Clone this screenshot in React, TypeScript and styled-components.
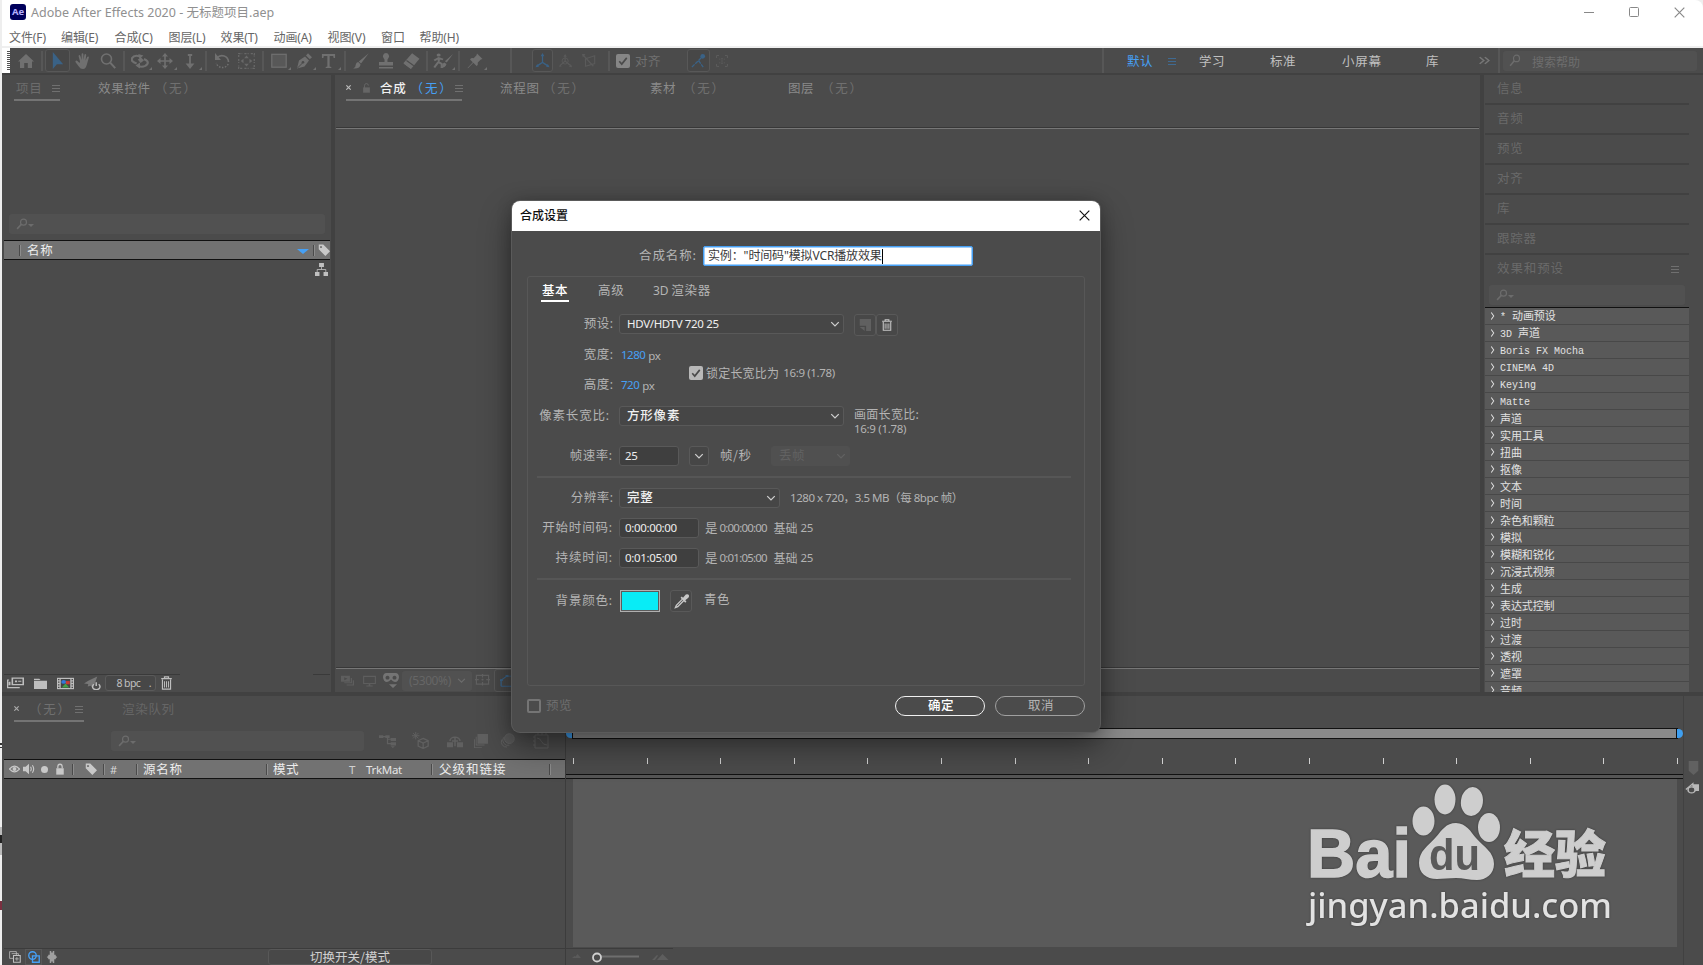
import React from "react";
import styled, { createGlobalStyle, css } from "styled-components";

const LATIN = `"Noto Sans", "Open Sans", "Noto Sans CJK SC", sans-serif`;
const CJK = `"Noto Sans CJK SC", sans-serif`;
const BG = "#4b4b4b";
const GAP = "#414141";
const BLUE = "#46a0f5";

const Global = createGlobalStyle`
  * { box-sizing: border-box; }
  html, body { margin: 0; padding: 0; overflow: hidden; background: #fff; }
  svg { display: block; flex: none; }
`;

const Desktop = styled.div`
  position: relative;
  width: 1703px;
  height: 965px;
  padding-left: 2px;
  overflow: hidden;
  display: flex;
  flex-direction: column;
  font: 12px/1 ${LATIN};
  background: linear-gradient(#eee 0 740px, #eee 740px 743px, #333 743px 745px, #eee 745px 747px, #333 747px 748px, #eee 748px 827px, #bbb 827px 835px, #222 835px 843px, #bbb 843px 855px, #eee 855px 901px, #7a3040 901px 910px, #eee 910px);
`;

type TP = { $c?: string; $s?: number; $ls?: number; $ml?: number; $w?: number; $b?: boolean; $up?: number };
const Txt = styled.span<TP>`
  flex: none;
  white-space: pre;
  line-height: 20px;
  color: ${(p) => p.$c || "#b4b4b4"};
  font-size: ${(p) => p.$s || 12}px;
  letter-spacing: ${(p) => p.$ls || 0}px;
  margin-left: ${(p) => p.$ml || 0}px;
  margin-top: ${(p) => p.$up || 0}px;
  ${(p) => p.$w && css`width: ${p.$w}px;`}
  ${(p) => p.$b && css`font-weight: 500;`}
`;
const Han = styled(Txt)`
  font-family: ${CJK};
  font-size: ${(p) => p.$s || 12.5}px;
  letter-spacing: ${(p) => p.$ls ?? 0.5}px;
`;

/* title bar and menus */
const TitleBar = styled.div`
  height: 24px;
  flex: none;
  display: flex;
  align-items: center;
  background: #fff;
  padding-left: 8px;
  border-top-right-radius: 8px;
`;
const AppBadge = styled.div`
  width: 16px;
  height: 16px;
  border-radius: 3px;
  background: #00005b;
  color: #b5b0ff;
  font: bold 9.5px/15px ${LATIN};
  text-align: center;
  margin-right: 5px;
`;
const WinButtons = styled.div`
  margin-left: auto;
  display: flex;
  align-items: center;
  gap: 35px;
  padding-right: 18px;
`;
const MenuBar = styled.div`
  height: 24px;
  flex: none;
  display: flex;
  align-items: center;
  background: #fff;
  border-bottom: 2px solid #efefef;
  padding: 6px 0 0 7px;
`;
const MenuItem = styled.span<{ $w: number }>`
  width: ${(p) => p.$w}px;
  font-size: 12px;
  letter-spacing: -0.1px;
  white-space: nowrap;
  color: #666;
`;

/* tool bar */
const ToolBar = styled.div`
  height: 25px;
  flex: none;
  display: flex;
  align-items: center;
  background: ${BG};
`;
const Grip = styled.div`
  width: 8px;
  height: 25px;
  background: #fff;
  padding: 3px 0 2px 5px;
  &::after {
    content: "";
    display: block;
    height: 20px;
    background: repeating-linear-gradient(#555 0 1px, #fff 1px 2px);
  }
`;
const Tool = styled.div<{ $on?: boolean; $w?: number; $more?: boolean; $ml?: number }>`
  position: relative;
  width: ${(p) => p.$w || 25}px;
  height: 23px;
  flex: none;
  margin-left: ${(p) => p.$ml || 0}px;
  display: flex;
  align-items: center;
  justify-content: center;
  color: #707070;
  ${(p) => p.$on && css`border: 1px solid #585858; border-radius: 3px; background: #474747; color: #3a6286;`}
  ${(p) => p.$more && css`
    &::after {
      content: "";
      position: absolute;
      right: 0;
      bottom: 2px;
      border-left: 3px solid transparent;
      border-bottom: 3px solid #707070;
    }
  `}
`;
const Sep = styled.div<{ $ml?: number; $mr?: number; $h?: number }>`
  width: 2px;
  height: ${(p) => p.$h || 20}px;
  flex: none;
  background: #575757;
  margin: 0 ${(p) => p.$mr ?? 2.5}px 0 ${(p) => p.$ml ?? 2.5}px;
`;
const Field = styled.div<{ $w: number; $ml?: number; $pl?: number }>`
  width: ${(p) => p.$w}px;
  height: 20px;
  flex: none;
  display: flex;
  align-items: center;
  padding-left: ${(p) => p.$pl ?? 7}px;
  margin-left: ${(p) => p.$ml || 0}px;
  background: #515151;
  border-radius: 3px;
  color: #6c6c6c;
`;
const CheckBox = styled.div<{ $c: string; $empty?: boolean }>`
  width: 14px;
  height: 14px;
  flex: none;
  border-radius: 2px;
  display: flex;
  align-items: center;
  justify-content: center;
  color: ${BG};
  background: ${(p) => (p.$empty ? "transparent" : p.$c)};
  border: ${(p) => (p.$empty ? `2px solid ${p.$c}` : "none")};
`;

/* panels */
const Upper = styled.div`
  height: 623px;
  flex: none;
  display: grid;
  grid-template-columns: 329px 1145px 219px;
  column-gap: 4px;
  padding: 2px 0 4px;
  background: ${GAP};
`;
const Panel = styled.div`
  background: ${BG};
  display: flex;
  flex-direction: column;
  min-width: 0;
  overflow: hidden;
`;
const Tabs = styled.div<{ $pl: number }>`
  height: 26px;
  flex: none;
  display: flex;
  padding: 1px 0 0 ${(p) => p.$pl}px;
`;
const Tab = styled.div<{ $w: number; $on?: boolean; $mr?: number; $pl?: number }>`
  width: ${(p) => p.$w}px;
  height: 25px;
  flex: none;
  display: flex;
  align-items: center;
  padding: 0 0 0 ${(p) => p.$pl || 0}px;
  margin-right: ${(p) => p.$mr || 0}px;
  border-bottom: 2px solid ${(p) => (p.$on ? "#747474" : "transparent")};
`;
const Burger = styled.i<{ $c?: string; $ml?: number }>`
  width: 8px;
  height: 7px;
  flex: none;
  position: relative;
  top: 1px;
  margin-left: ${(p) => p.$ml ?? 0}px;
  background: linear-gradient(
    ${(p) => p.$c || "#707070"} 0 1px, transparent 1px 3px,
    ${(p) => p.$c || "#707070"} 3px 4px, transparent 4px 6px,
    ${(p) => p.$c || "#707070"} 6px 7px
  );
`;
const Grow = styled.div<{ $h?: number }>`
  ${(p) => (p.$h ? css`height: ${p.$h}px; flex: none;` : css`flex: 1;`)}
`;
const ColumnHead = styled.div<{ $m?: string }>`
  height: 20px;
  flex: none;
  display: flex;
  align-items: center;
  margin: ${(p) => p.$m || 0};
  background: #727272;
  border-top: 1px solid #111;
  border-bottom: 1px solid #111;
  color: #c8c8c8;
`;
const Col = styled.div<{ $w?: number; $pl?: number; $sep?: boolean }>`
  height: 18px;
  ${(p) => (p.$w ? css`width: ${p.$w}px; flex: none;` : css`flex: 1;`)}
  display: flex;
  align-items: center;
  padding-left: ${(p) => p.$pl || 0}px;
  ${(p) => p.$sep && css`
    background: linear-gradient(#4a4a4a, #4a4a4a) right 1px center / 1px 11px no-repeat,
      linear-gradient(#8c8c8c, #8c8c8c) right center / 1px 11px no-repeat;
  `}
`;
const FootBar = styled.div<{ $h: number; $pl?: number; $pb?: number }>`
  height: ${(p) => p.$h}px;
  flex: none;
  display: flex;
  align-items: center;
  padding: 0 0 ${(p) => p.$pb || 0}px ${(p) => p.$pl || 0}px;
  color: #bebebe;
`;
const ShortLines = styled.div`
  height: 1px;
  flex: none;
  display: flex;
  justify-content: space-between;
  padding: 0 1px 0 2px;
  &::before, &::after { content: ""; height: 1px; background: #3a3a3a; }
  &::before { width: 176px; }
  &::after { width: 17px; }
`;
const Rule = styled.div`
  height: 2px;
  flex: none;
  margin: 0 1px;
  border-top: 1px solid #383838;
  background: #777;
`;
const DepthButton = styled.div`
  width: 51px;
  height: 16px;
  margin: 0 4px 0 4px;
  display: flex;
  align-items: center;
  justify-content: flex-end;
  padding-right: 4px;
  border: 1px solid #5a5a5a;
  border-radius: 3px;
  background: #474747;
`;

/* side panel */
const SideTitle = styled.div<{ $last?: boolean }>`
  height: 30px;
  flex: none;
  margin: 0 14px 0 1px;
  padding: 0 10px ${(p) => (p.$last ? 4 : 2)}px 12px;
  display: flex;
  align-items: center;
  justify-content: space-between;
  border-bottom: ${(p) => (p.$last ? "none" : `2px solid ${GAP}`)};
`;
const EffectList = styled.div`
  flex: 1;
  min-height: 0;
  overflow: hidden;
  margin: 2px 14px 0 1px;
  border-top: 1px solid #111;
`;
const EffectRow = styled.div`
  height: 17px;
  display: flex;
  align-items: center;
  gap: 5px;
  padding-left: 5px;
  background: #595959;
  border-bottom: 1px solid #484848;
  color: #e2e2e2;
  font: 11px/16px ${CJK};
  letter-spacing: -0.1px;
  white-space: pre;
`;
const Mono = styled.span`
  font: 10px/16px "Liberation Mono", monospace;
  letter-spacing: 0;
`;

/* timeline */
const Timeline = styled.div`
  flex: 1;
  min-height: 0;
  display: grid;
  grid-template-columns: 563px 1118px 20px;
  background: ${BG};
`;
const LayerPane = styled.div`
  display: flex;
  flex-direction: column;
  padding-left: 2px;
`;
const SwitchRow = styled.div`
  height: 37px;
  flex: none;
  display: flex;
  align-items: center;
  color: #606060;
`;
const FootBtn = styled.div`
  width: 164px;
  height: 16px;
  display: flex;
  align-items: center;
  justify-content: center;
  border: 1px solid #585858;
  border-radius: 3px;
  background: #484848;
`;
const TrackPane = styled.div`
  display: flex;
  flex-direction: column;
  padding-top: 32px;
  border-left: 1px solid #3c3c3c;
`;
const WorkArea = styled.div`
  height: 11px;
  flex: none;
  display: flex;
  background: linear-gradient(#111, #111) 6px 0 / 1106px 100% no-repeat;
  padding: 1px 0;
`;
const Handle = styled.div<{ $left?: boolean }>`
  width: 6px;
  height: 9px;
  background: #3f9ff0;
  border-radius: ${(p) => (p.$left ? "5px 0 0 5px" : "0 5px 5px 0")};
`;
const WorkBar = styled.div`
  width: 1106px;
  background: #8a8a8a;
  border: 0 solid #111;
  border-width: 0 1px;
`;
const Ticks = styled.div`
  height: 35px;
  width: 1105px;
  flex: none;
  margin-left: 7px;
  padding-top: 19px;
  display: flex;
  justify-content: space-between;
`;
const Tick = styled.i`
  width: 1px;
  height: 6px;
  background: #d0d0d0;
`;
const RulerEnd = styled.div`
  height: 5px;
  flex: none;
  border-top: 1px solid #111;
  border-bottom: 1px solid #111;
  background: #555;
`;
const Tracks = styled.div`
  height: 168px;
  width: 1104px;
  flex: none;
  margin-left: 7px;
  background: #5a5a5a;
`;
const ZoomBar = styled.div`
  flex: 1;
  display: flex;
  align-items: center;
  padding: 2px 0 0 6px;
  background: linear-gradient(#3c3c3c, #3c3c3c) 0 1px / 107px 1px no-repeat;
`;
const EdgePane = styled.div`
  display: flex;
  flex-direction: column;
  gap: 7px;
  padding: 65px 0 0 1px;
  border-left: 1px solid #414141;
`;

/* dialog */
const Dialog = styled.div`
  position: absolute;
  left: 512px;
  top: 201px;
  width: 588px;
  height: 531px;
  border-radius: 8px;
  background: ${BG};
  box-shadow: 0 0 0 1px #5a5a5a, 0 14px 32px rgba(0, 0, 0, 0.42), 0 0 16px rgba(0, 0, 0, 0.2);
  overflow: hidden;
  display: flex;
  flex-direction: column;
`;
const DialogTitle = styled.div`
  height: 30px;
  flex: none;
  display: flex;
  align-items: center;
  justify-content: space-between;
  padding: 0 10px 2px 8px;
  background: #fff;
  color: #111;
`;
const NameRow = styled.div`
  height: 45px;
  flex: none;
  display: flex;
  align-items: center;
  padding-top: 5px;
`;
const NameInput = styled.div`
  width: 270px;
  height: 20px;
  display: flex;
  align-items: center;
  padding-left: 4px;
  background: #fff;
  border: 1px solid ${BLUE};
  border-radius: 2px;
  box-shadow: inset 0 0 0 0.5px ${BLUE};
`;
const Caret = styled.i`
  width: 1px;
  height: 15px;
  background: #000;
`;
const Group = styled.div`
  height: 410px;
  margin: 0 15px;
  border: 1px solid #575757;
  border-radius: 3px;
  display: flex;
  flex-direction: column;
`;
const GroupTabs = styled.div`
  height: 25px;
  flex: none;
  display: flex;
  padding-left: 13px;
  margin-bottom: 1px;
`;
const GroupTab = styled.div<{ $w: number; $mr?: number; $on?: boolean }>`
  width: ${(p) => p.$w}px;
  margin-right: ${(p) => p.$mr || 0}px;
  padding-top: 3px;
  border-bottom: 2px solid ${(p) => (p.$on ? "#fff" : "transparent")};
`;
const Row = styled.div<{ $mt: number; $h?: number }>`
  height: ${(p) => p.$h || 20}px;
  flex: none;
  margin-top: ${(p) => p.$mt}px;
  display: flex;
  align-items: center;
`;
const Label = styled.div<{ $pr?: number }>`
  width: 91px;
  padding-right: ${(p) => p.$pr ?? 7}px;
  margin-top: -2px;
  text-align: right;
  flex: none;
`;
const Box = styled.div<{ $w: number; $ml?: number; $h?: number; $pl?: number; $kind?: "input" | "off" }>`
  width: ${(p) => p.$w}px;
  height: ${(p) => p.$h || 20}px;
  flex: none;
  display: flex;
  align-items: center;
  justify-content: space-between;
  margin-left: ${(p) => p.$ml || 0}px;
  padding: 0 3px 0 ${(p) => p.$pl ?? 7}px;
  border: 1px solid ${(p) => (p.$kind === "off" ? "#505050" : "#595959")};
  border-radius: 3px;
  background: ${(p) => (p.$kind === "input" ? "#3f3f3f" : p.$kind === "off" ? "#505050" : "#464646")};
  color: ${(p) => (p.$kind === "off" ? "#626262" : "#d0d0d0")};
`;
const IconBox = styled.div<{ $ml?: number; $mt?: number }>`
  width: 22px;
  height: 22px;
  flex: none;
  margin-left: ${(p) => p.$ml || 0}px;
  margin-top: ${(p) => p.$mt || 0}px;
  display: flex;
  align-items: center;
  justify-content: center;
  border: 1px solid #595959;
  border-radius: 3px;
  background: #484848;
  color: #c8c8c8;
`;
const Size = styled.div`
  display: flex;
  margin-top: 11px;
`;
const SizeFields = styled.div`
  width: 161px;
  display: flex;
  flex-direction: column;
  gap: 10px;
`;
const SizeLine = styled.div`
  height: 20px;
  display: flex;
  align-items: center;
`;
const LockRatio = styled.div`
  display: flex;
  align-items: center;
  height: 20px;
  margin-top: 18px;
`;
const Aspect = styled.div`
  margin-left: 10px;
  height: 34px;
  margin-top: 9px;
  display: flex;
  flex-direction: column;
`;
const Divider = styled.div<{ $mt: number }>`
  height: 2px;
  flex: none;
  margin: ${(p) => p.$mt}px 13px 0 9px;
  background: #565656;
`;
const Swatch = styled.div`
  width: 40px;
  height: 22px;
  margin-left: 1px;
  background: #08ecf6;
  border: 1px solid #b0b0b0;
  box-shadow: inset 0 0 0 1px #5c5c5c;
`;
const DialogFoot = styled.div`
  height: 20px;
  margin: 10px 15px 0;
  display: flex;
  align-items: center;
`;
const Pill = styled.div<{ $primary?: boolean }>`
  width: 90px;
  height: 20px;
  display: flex;
  align-items: center;
  justify-content: center;
  padding: 0 0 2px 2px;
  border-radius: 10px;
  border: ${(p) => (p.$primary ? "1.5px solid #f0f0f0" : "1px solid #a0a0a0")};
  margin-left: ${(p) => (p.$primary ? "auto" : "10px")};
`;
const Watermark = styled.svg`
  position: absolute;
  left: 1300px;
  top: 776px;
  filter: drop-shadow(0 0 1px rgba(0, 0, 0, 0.35));
`;

/* icons: drawn on a 16px grid with the current colour */
const f = { fill: "currentColor", stroke: "none" };
const glyphs: Record<string, React.ReactNode> = {
  home: <path {...f} d="M8 1 0 8.500h2V15h4.200v-5h3.600v5H14V8.500h2z" />,
  arrow: <path {...f} d="M3 0v16l4.300-4.500H14z" />,
  hand: <path {...f} d="M5 8.500 3.600 3.200q-.2-1.200.7-1.300.8 0 1.100 1L6.600 7V1.300Q6.700.3 7.500.3t.9 1V7l1-5q.3-1 1-.9.900.2.8 1.200l-.7 5.200 1.700-3.400q.5-.9 1.200-.6.7.4.4 1.300l-2 7Q10.800 16 8 16q-2.800 0-4.200-2.600L.6 9.200Q0 8.200.8 7.700q.8-.4 1.600.3L4.600 10z" />,
  zoom: <><circle cx="6.500" cy="6" r="5" strokeWidth="1.600" /><path d="m10.200 9.700 5 5.500" strokeWidth="2" /></>,
  orbit: <><path d="M5 10.500Q-.5 8.500 1 5 3 1.500 8 3.500" strokeWidth="2" /><path d="M11.500 6q4.500 2 3 5-2.500 4-8.500 2" strokeWidth="2" /><path {...f} d="m6.500 1 4.500 1.500L7.500 6zM8 9.500v6L4 12.500zM6 6.500l3-2 2.500 3-3 2.500z" /></>,
  move: <><path d="M8 2v12M2 8h12" strokeWidth="1.600" /><path {...f} d="m8 0 3 3.500H5zM8 16l3-3.500H5zM0 8l3.500-3v6zM16 8l-3.500-3v6z" /></>,
  dolly: <><path d="M8 1v11" strokeWidth="2" /><path {...f} d="M8 16 3 10.500h10zM5.500 1h5v2h-5z" /></>,
  rotate: <><path d="M3 5a6.500 6.500 0 0 1 11.500 4" strokeWidth="1.600" /><path d="M14.200 11a6.500 6.500 0 0 1-12-1" strokeWidth="1.400" strokeDasharray="1.500 1.500" /><path {...f} d="M1 0v7h6z" /></>,
  anchor: <><path d="M.7 4V.7H4M12 .7h3.300V4M15.300 12v3.300H12M4 15.300H.7V12M6 .7h4M6 15.300h4M.7 6v4M15.300 6v4" strokeWidth="1.200" strokeDasharray="2 1" /><path {...f} d="m8 2.500 2.200 2.700H5.800zM8 13.500l2.200-2.700H5.800zM2.500 8l2.700-2.200v4.400zM13.500 8l-2.700-2.200v4.400z" /></>,
  rect: <rect x=".8" y="1.300" width="14.400" height="12.900" fill="#585858" strokeWidth="1.200" />,
  pen: <><path {...f} d="M1 15.500 3 7.500l6-4 4 4-4.500 6z" /><path d="m1.500 15 5-5" stroke={BG} strokeWidth="1" /><circle cx="7" cy="9.300" r="1.300" fill={BG} stroke="none" /><path {...f} d="m10 2.500 2-2.200 4 4-2.200 2z" /></>,
  type: <path {...f} d="M1 1h14v4h-1.500l-.5-2H9.200v10.500l1.800.5v1H5v-1l1.800-.5V3H3l-.5 2H1z" />,
  brush: <path {...f} d="M15.800.2 8 10.500 5.800 8.400zM5.200 9l2.300 2.300Q7.500 16 .2 15.500 3 14 2.800 11.500 3.200 9 5.200 9z" />,
  stamp: <path {...f} d="M8 0a3.200 3.200 0 0 1 2.300 5.300Q9 6.500 9.500 9H15v3.500H1V9h5.500Q7 6.500 5.700 5.300A3.200 3.200 0 0 1 8 0zM1 14h14v1.500H1z" />,
  eraser: <><path {...f} d="M9 1.200 15.500 6 8 15 1.200 10z" /><path d="m4 7.500 6.500 4.700" stroke={BG} strokeWidth="1" /><path d="m2 10 6 4.500" strokeWidth="1" /></>,
  roto: <><circle cx="4.500" cy="2" r="1.600" {...f} /><path d="M1 7.500 4.500 5 8 6.500M4.800 5l-.3 4L7 11v4M4 9.500 1 14.500" strokeWidth="1.700" /><path {...f} d="M16 1 11 9.500 9.500 8.200zM9 9.500l1.800 1.500Q10 15 6 15q2-1.500 1.500-3 .3-2 1.500-2.500z" /></>,
  pin: <path {...f} d="m10 .5 5.500 5.500-1.700.5-3 3q.5 2.500-1.200 3.500L6.300 9.800 1 15.300.5 15l5.300-5.800L3 6.500Q4 4.700 6.700 5.200l2.800-3z" />,
  axis: <><path d="M8 2.500V10M8 10l-6 4M8 10l6 4" strokeWidth="1.300" /><path {...f} d="m8 0 2 3.500H6zM.5 15.200l3.700-.5-1.800-3zM15.500 15.200l-3.700-.5 1.800-3z" /></>,
  axisWorld: <><circle cx="7" cy="8" r="3.500" /><path d="M7 2v6L1.500 13M7 8l7 6" strokeWidth="1.300" /><path {...f} d="m7 0 2 3H5zM15 15l-3.500-.5 2-3zM0 14.500l3-.3-1.700-2.600z" /></>,
  axisView: <><path d="M4 5.500 14.500 2v9L4 14zM2 2l11 12" strokeWidth="1.300" /><path {...f} d="M0 0h4L1 4z" /></>,
  snap: <><path d="m1 15 6-6 5-5M8 8l5 7" strokeWidth="1.400" strokeDasharray="4 1" /><circle {...f} cx="12.500" cy="3.500" r="2.500" /></>,
  frameSnap: <><path d="M.8 4V.8H4M12 .8h3.200V4M15.200 12v3.200H12M4 15.200H.8V12" strokeWidth="1.300" /><path d="M5 5v1M11 5v1M5 10v1M11 10v1M7 8h2M8 4v2M8 10v2" strokeWidth="1.600" /></>,
  search: <><circle cx="10" cy="5.500" r="4" strokeWidth="1.600" /><path d="M7 8.500 1.500 14.500" strokeWidth="2" /></>,
  lock: <><path d="M4.500 8V4.500a3.300 3.300 0 0 1 6.800-.5" strokeWidth="1.600" /><path {...f} d="M2 7h12v8.500H2z" /></>,
  locked: <><path d="M4.500 7V5a3.500 3.500 0 0 1 7 0v2" strokeWidth="2" /><path {...f} d="M2 7h12v8.500H2z" /></>,
  tag: <path {...f} fillRule="evenodd" d="M1 .5h6L16 9.800 9.800 16 1 7zM4 2.500a1.500 1.500 0 1 0 .01 0z" />,
  flow: <><path {...f} d="M5 0h6v5H5zM0 11h5.500v5H0zM10.500 11H16v5h-5.500z" /><path d="M8 5v3M2.700 11V8h10.600v3" /></>,
  footage: <><path d="M5 2.500h10.300v7.300H5z" strokeWidth="1.500" /><path {...f} d="M7.500 5h2v2h-2zM10.500 5.500h3v1h-3zM0 4h2v1.200H1.200v7.300H12V14H0zM1.500 6.500H3.300v4H1.500z" /></>,
  folder: <path {...f} d="M0 1h6.500l1.500 2H0zM0 4h16v12H0z" />,
  comp: <><path {...f} d="M0 1h16v14H0z" /><path fill="#444" stroke="none" d="M3.500 2.500h9v11h-9zM1 2.500h1.300V4H1zM1 5.500h1.300V7H1zM1 9h1.300v1.500H1zM1 12h1.300v1.500H1zM13.700 2.500H15V4h-1.300zM13.700 5.500H15V7h-1.300zM13.700 9H15v1.500h-1.300zM13.700 12H15v1.500h-1.300z" /><circle cx="6.300" cy="6" r="2.300" fill="#3278d8" stroke="none" /><path fill="#c83a34" stroke="none" d="M8.300 5h3.700v4H8.300z" /><path fill="#43a047" stroke="none" d="m8 8 3.500 5h-7z" /></>,
  rocket: <><path fill="#777" stroke="none" d="M12.500.5 4 5.500 0 8.500l4 .5-.5 3 3-1 1.500 3 2-5z" /><path d="M9.300 9.500a3.500 3.500 0 1 0 4.500 0M11.500 7v4.500" strokeWidth="1.400" /></>,
  trash: <><path d="M1.500 3h13M5.500 3V1h5v2M3 4v11h10V4" strokeWidth="1.400" /><path d="M5.500 6v7M8 6v7M10.500 6v7" strokeWidth="1.200" /></>,
  stack: <path {...f} fillRule="evenodd" d="M0 1h11v8H0zM4 3v4l4-2zM12 4h1.500v7H4V9.800h8zM14.500 7H16v7H7v-1.500h7.500z" />,
  monitor: <><path d="M.8 1.800h14.400v9.400H.8z" strokeWidth="1.400" /><path {...f} d="M7 11.500h2V14h3v1.200H4V14h3z" /></>,
  mask: <path {...f} fillRule="evenodd" d="M3.500 0h9Q16 .3 16 4.500 15.500 9.500 12 9.500 10 9.500 8 7 6 9.500 4 9.500.5 9.500 0 4.500 0 .3 3.500 0zM4.500 3a2 2 0 1 0 .01 0zM11.500 3a2 2 0 1 0 .01 0zM6 12h8l-4 4z" />,
  region: <path d="M1.500 1.500h13v10h-13zM8 0v4M8 9v4M0 6.500h4M12 6.500h4M8 5.500v2M7 6.500h2" strokeWidth="1.300" />,
  shape: <><path d="M1 15V7l5-5.500h10M1 15h15" strokeWidth="1.200" /><path {...f} d="M0 5.500h2.500V8H0zM5 0h2.500v2.500H5z" /></>,
  branch: <><path d="M2 3h5M8 3v8h4M8 6h5" strokeWidth="1.200" /><path {...f} d="M0 1.500h4v3H0zM6 1.500h4v3H6zM11 4.500h5V8h-5zM11 9.500h5V13h-5zM11 14h4l-2 2z" /></>,
  cube: <><path d="m10.500 6 4.700 2.200v5l-4.700 2.300-4.700-2.300v-5zM5.800 8.200l4.700 2.300 4.700-2.300M10.500 10.500v5" strokeWidth="1.200" /><path d="M3.500 0v7M0 3.500h7M1 1l5 5M6 1 1 6" strokeWidth=".9" /></>,
  shy: <><path {...f} d="M0 9.500h6V15H0zM10 9.500h6V15h-6z" /><path d="M3 8a5 4.500 0 0 1 10 0M8 3.500V14M5 8h6" strokeWidth="1.500" /></>,
  film: <path {...f} d="M4 0h12v11H4zM2 3h1v9h9v1H2zM0 6h1v9h8v1H0z" />,
  blur: <><circle cx="10" cy="6" r="5.200" fill="#575757" /><path d="M4 4.500a5.500 5.500 0 0 0 6 8.500M2 7a5.500 5.500 0 0 0 5.500 8" /></>,
  graph: <><path d="M2 2h13v13H2zM0 4h2M0 8h2M0 12h2M5 2V0M9 2V0M13 2V0" /><path d="M4 5q3 0 4.500 3.500T14 12" /></>,
  eye: <><path d="M.7 8Q8 .5 15.300 8 8 15.500.7 8z" strokeWidth="1.600" /><circle {...f} cx="8" cy="8" r="2.800" /></>,
  speaker: <><path {...f} d="M0 5h3.500L8 1v14l-4.500-4H0z" /><path d="M10 5q2 3 0 6M12.500 3q3.500 5 0 10" strokeWidth="1.500" /></>,
  copy: <><path d="M.8.800h9v9h-9zM3.500 3.500h9v9" /><path d="M6 6h9v9H6z" fill={BG} strokeWidth="1.400" /><path d="M10.500 8v5M8 10.500h5" /></>,
  overlap: <><circle cx="6" cy="6" r="5" strokeWidth="1.800" /><path d="M6 6.500h9V15H6z" strokeWidth="1.800" /></>,
  curly: <path {...f} d="M5 0h2v2h2V0h2v5h2v1.500l2 1.500-2 1.500V11h-2v5H9v-2H7v2H5v-5H3V9.500L1 8l2-1.500V5h2z" />,
  close: <path d="m1 1 14 14M15 1 1 15" strokeWidth="1.700" />,
  tabClose: <path d="m1 1 14 14M15 1 1 15" strokeWidth="3.600" />,
  chevron: <path d="m2 5 6 6 6-6" strokeWidth="2" />,
  right: <path d="m4 1 8 7-8 7" strokeWidth="2.400" />,
  more: <path d="m1 2 6 6-6 6M8.500 2l6 6-6 6" strokeWidth="2.400" />,
  check: <path d="m2 8.500 4 4.500 8-10" strokeWidth="2.600" />,
  note: <path {...f} d="M1 0h15v16H9.500V9H1z M1 10.500h6.500V16z" />,
  dropper: <><path d="M9 5.500 2.500 12 1.500 14.500 4 13.500 10.500 7" strokeWidth="1.400" /><path {...f} d="m7 4 1.300-1.300 1.300 1.200 3-3.300q2-1 3 .3 1 1.500-.3 3L12 6.700l1.300 1.300L12 9.300z" /></>,
  keyframe: <><path d="m1 10 8-8v4" strokeWidth="1.500" /><path {...f} d="M9 3h7v9H9z" /><circle cx="7.500" cy="10.500" r="4" fill={BG} strokeWidth="1.800" /></>,
  marker: <path {...f} d="M1 0h14v11l-7 5-7-5z" />,
};
const Svg = styled.svg<{ $ml: number; $c?: string }>`
  margin-left: ${(p) => p.$ml}px;
  ${(p) => p.$c && css`color: ${p.$c};`}
`;
const Icon = ({ n, w = 16, h, c, ml = 0 }: { n: string; w?: number; h?: number; c?: string; ml?: number }) => (
  <Svg $ml={ml} $c={c} width={w} height={h || w} viewBox="0 0 16 16" preserveAspectRatio="none" fill="none" stroke="currentColor">
    {glyphs[n]}
  </Svg>
);
const DropArrow = styled.i<{ $w?: number; $h?: number; $c?: string }>`
  border: ${(p) => p.$w || 3}px solid transparent;
  border-top: ${(p) => p.$h || 3}px solid ${(p) => p.$c || "currentColor"};
  border-bottom: 0;
  margin-top: 3px;
`;
const SearchGlyph = () => (
  <>
    <Icon n="search" w={12} />
    <DropArrow />
  </>
);
const Dot = styled.i`
  width: 7px;
  height: 7px;
  margin-left: 6px;
  border-radius: 50%;
  background: currentColor;
`;
const ShortFoot = styled.div`
  height: 17px;
  flex: none;
  display: flex;
  align-items: center;
  padding-left: 5px;
  border-top: 1px solid #3c3c3c;
  color: #c0c0c0;
`;
const OnBox = styled.div`
  width: 17px;
  height: 16px;
  margin-left: 4px;
  display: flex;
  align-items: center;
  justify-content: center;
  border: 1px solid #585858;
`;
const FootGap = styled.div`
  width: 210px;
`;

const menus: [string, number][] = [
  ["文件(F)", 52], ["编辑(E)", 53.5], ["合成(C)", 54], ["图层(L)", 52], ["效果(T)", 53],
  ["动画(A)", 54], ["视图(V)", 53.5], ["窗口", 38.5], ["帮助(H)", 60],
];
const effects = [
  "* 动画预设", "3D 声道", "Boris FX Mocha", "CINEMA 4D", "Keying", "Matte", "声道", "实用工具", "扭曲", "抠像",
  "文本", "时间", "杂色和颗粒", "模拟", "模糊和锐化", "沉浸式视频", "生成", "表达式控制", "过时", "过渡", "透视", "遮罩", "音频",
];
const mixed = (s: string) => {
  const m = s.match(/^[\x00-\x7f]+/);
  return m ? <span><Mono>{m[0]}</Mono>{s.slice(m[0].length)}</span> : <span>{s}</span>;
};
const None = ({ ml, c = "#707070", w }: { ml: number; c?: string; w?: number }) => (
  <Han $c={c} $ml={ml} $ls={1.8} $w={w}>（无）</Han>
);

const TimeRow = ({ label, value, mt }: { label: string; value: string; mt: number }) => (
  <Row $mt={mt}>
    <Label><Han $ls={0.8}>{label}</Han><Txt>:</Txt></Label>
    <Box $w={80} $pl={5} $kind="input"><Txt $c="#eee" $s={11.5} $ls={-0.35}>{value}</Txt></Box>
    <Han $ml={6} $ls={0}>是</Han>
    <Txt $s={11.5} $ls={-0.8} $ml={2} $w={54}>{value}</Txt>
    <Han $s={12} $ls={0}>基础</Han>
    <Txt $s={11.5} $ml={3} $ls={-0.3}>25</Txt>
  </Row>
);

const SettingsDialog = () => (
  <Dialog>
    <DialogTitle>
      <Han $c="#111" $s={12} $ls={0} $b>合成设置</Han>
      <Icon n="close" w={11} />
    </DialogTitle>
    <NameRow>
      <Han $ml={127} $ls={0.9} $w={64} $up={-2}>合成名称:</Han>
      <NameInput>
        <Txt $c="#3a3a3a" $s={12} $ls={-0.13}>实例："时间码"模拟VCR播放效果</Txt>
        <Caret />
      </NameInput>
    </NameRow>
    <Group>
      <GroupTabs>
        <GroupTab $w={28} $mr={29} $on><Han $c="#fff" $ml={1} $b>基本</Han></GroupTab>
        <GroupTab $w={28} $mr={27}><Han $ls={0.8}>高级</Han></GroupTab>
        <GroupTab $w={70}><Txt $ls={-0.2}>3D </Txt><Han $ls={0.8}>渲染器</Han></GroupTab>
      </GroupTabs>
      <Row $mt={11}>
        <Label $pr={6}><Han>预设</Han><Txt>:</Txt></Label>
        <Box $w={225}><Txt $c="#f0f0f0" $s={11.5} $ls={-0.33}>HDV/HDTV 720 25</Txt><Icon n="chevron" w={10} /></Box>
        <IconBox $ml={10} $mt={2}><Icon n="note" w={12} c="#606060" /></IconBox>
        <IconBox $mt={2}><Icon n="trash" w={12} /></IconBox>
      </Row>
      <Size>
        <SizeFields>
          <SizeLine>
            <Label $pr={6}><Han>宽度</Han><Txt>:</Txt></Label>
            <Txt $c={BLUE} $s={11.5} $ls={-0.5} $ml={2}>1280</Txt><Txt $ml={3} $s={11.5} $ls={-0.4} $up={2}>px</Txt>
          </SizeLine>
          <SizeLine>
            <Label $pr={6}><Han>高度</Han><Txt>:</Txt></Label>
            <Txt $c={BLUE} $s={11.5} $ls={-0.5} $ml={2}>720</Txt><Txt $ml={3} $s={11.5} $ls={-0.4} $up={2}>px</Txt>
          </SizeLine>
        </SizeFields>
        <LockRatio>
          <CheckBox $c="#b8b8b8"><Icon n="check" w={10} /></CheckBox>
          <Han $ml={3} $s={12} $ls={0.2}>锁定长宽比为</Han><Txt $ml={4} $s={11.5} $ls={-0.35}>16:9 (1.78)</Txt>
        </LockRatio>
      </Size>
      <Row $mt={11}>
        <Label $pr={10}><Han $ls={0.8}>像素长宽比</Han><Txt>:</Txt></Label>
        <Box $w={225}><Han $c="#f0f0f0" $ls={0.8} $b $up={-2}>方形像素</Han><Icon n="chevron" w={10} /></Box>
        <Aspect>
          <Han $s={12} $ls={0.3}>画面长宽比:</Han>
          <Txt $s={11.5} $ls={-0.3} $up={-5}>16:9 (1.78)</Txt>
        </Aspect>
      </Row>
      <Row $mt={20}>
        <Label><Han>帧速率</Han><Txt>:</Txt></Label>
        <Box $w={60} $pl={5} $kind="input"><Txt $c="#eee" $s={11.5} $ls={-0.3}>25</Txt></Box>
        <Box $w={20} $ml={10} $pl={4}><Icon n="chevron" w={10} /></Box>
        <Han $ml={11} $w={51} $up={-2}>帧/秒</Han>
        <Box $w={79} $kind="off" $pl={7}><Han $c="#626262" $up={-2}>丢帧</Han><Icon n="chevron" w={10} /></Box>
      </Row>
      <Divider $mt={10} />
      <Row $mt={10}>
        <Label $pr={6}><Han>分辨率</Han><Txt>:</Txt></Label>
        <Box $w={161}><Han $c="#f0f0f0" $ls={0.8} $b $up={-2}>完整</Han><Icon n="chevron" w={10} /></Box>
        <Txt $ml={10} $s={11.5} $ls={-0.45}>1280 x 720，3.5 MB（每 8bpc 帧）</Txt>
      </Row>
      <TimeRow label="开始时间码" value="0:00:00:00" mt={10} />
      <TimeRow label="持续时间" value="0:01:05:00" mt={10} />
      <Divider $mt={10} />
      <Row $mt={10} $h={22}>
        <Label><Han $ls={0.8}>背景颜色</Han><Txt>:</Txt></Label>
        <Swatch />
        <IconBox $ml={10}><Icon n="dropper" w={15} /></IconBox>
        <Han $ml={12} $up={-4}>青色</Han>
      </Row>
    </Group>
    <DialogFoot>
      <CheckBox $c="#757575" $empty />
      <Han $ml={5} $c="#6e6e6e" $up={-2}>预览</Han>
      <Pill $primary><Han $c="#fff" $b>确定</Han></Pill>
      <Pill><Han>取消</Han></Pill>
    </DialogFoot>
  </Dialog>
);

export default function App() {
  return (
    <Desktop>
      <Global />
      <TitleBar>
        <AppBadge>Ae</AppBadge>
        <Txt $c="#909090" $s={12.5} $ls={0.02} $up={1}>Adobe After Effects 2020 - 无标题项目.aep</Txt>
        <WinButtons>
          <svg width="10" height="10"><path d="M0 5.500h10" stroke="#888" /></svg>
          <svg width="10" height="10"><rect x=".5" y=".5" width="9" height="9" rx="1" fill="none" stroke="#888" /></svg>
          <Icon n="close" w={11} c="#888" />
        </WinButtons>
      </TitleBar>
      <MenuBar>{menus.map(([m, w]) => <MenuItem key={m} $w={w}>{m}</MenuItem>)}</MenuBar>
      <ToolBar>
        <Grip />
        <Tool $ml={3}><Icon n="home" /></Tool><Sep />
        <Tool $on><Icon n="arrow" w={15} h={17} /></Tool><Tool><Icon n="hand" w={16} /></Tool><Tool><Icon n="zoom" /></Tool><Sep />
        <Tool $more><Icon n="orbit" w={18} h={16} /></Tool><Tool $more><Icon n="move" /></Tool><Tool $more><Icon n="dolly" w={14} h={16} /></Tool><Sep />
        <Tool><Icon n="rotate" w={16} /></Tool><Tool><Icon n="anchor" w={17} h={16} c="#686868" /></Tool><Sep />
        <Tool $more><Icon n="rect" w={16} h={16} /></Tool><Tool $more><Icon n="pen" w={16} /></Tool><Tool $more><Icon n="type" w={15} h={16} /></Tool><Sep />
        <Tool><Icon n="brush" /></Tool><Tool><Icon n="stamp" /></Tool><Tool><Icon n="eraser" w={18} /></Tool><Sep />
        <Tool $more><Icon n="roto" w={20} h={16} /></Tool><Sep />
        <Tool $more><Icon n="pin" w={16} /></Tool>
        <Sep $ml={23} $mr={20} $h={25} />
        <Tool $on $w={21}><Icon n="axis" w={15} /></Tool>
        <Tool><Icon n="axisWorld" w={14} c="#5a5a5a" /></Tool>
        <Tool $ml={-2}><Icon n="axisView" w={14} c="#5a5a5a" /></Tool>
        <Sep $ml={7} $mr={6} />
        <CheckBox $c="#868686"><Icon n="check" w={10} /></CheckBox>
        <Han $ml={5} $c="#707070" $w={52}>对齐</Han>
        <Tool $on $w={23}><Icon n="snap" w={15} /></Tool>
        <Tool $ml={-1}><Icon n="frameSnap" w={12} c="#5e5e5e" /></Tool>
        <Sep $ml={368} $mr={23} $h={25} />
        <Han $c={BLUE} $w={41}>默认</Han><Burger $c="#3f6a92" />
        <Han $c="#c0c0c0" $ml={23} $w={71}>学习</Han>
        <Han $c="#c0c0c0" $w={72}>标准</Han>
        <Han $c="#c0c0c0" $ls={0.8} $w={84}>小屏幕</Han>
        <Han $c="#c0c0c0" $w={53}>库</Han>
        <Icon n="more" w={11} h={9} c="#777" />
        <Sep $ml={8} $mr={3} $h={25} />
        <Field $w={194} $pl={6}><Icon n="search" w={12} h={13} /><Han $c="#6e6e6e" $ml={11} $s={12} $ls={0} $up={2}>搜索帮助</Han></Field>
      </ToolBar>
      <Upper>
        <Panel>
          <Tabs $pl={12}>
            <Tab $w={46} $on $pl={2} $mr={38}><Han $c="#6c6c6c" $ls={0.8}>项目</Han><Burger $ml={9} /></Tab>
            <Tab $w={110}><Han $c="#8a8a8a" $ls={0.7}>效果控件</Han><None ml={4} /></Tab>
          </Tabs>
          <Grow $h={113} />
          <Field $w={316} $ml={7}><SearchGlyph /></Field>
          <ColumnHead $m="6px 1px 0 2px">
            <Col $w={17} $sep />
            <Col $pl={6}><Han $c="#ececec" $ls={0.8}>名称</Han></Col>
            <Col $w={18} $sep><DropArrow $w={6} $h={5} $c={BLUE} /></Col>
            <Col $w={15} $pl={3}><Icon n="tag" w={12} /></Col>
          </ColumnHead>
          <FootBar $h={18} $pl={313}><Icon n="flow" w={13} c="#c0c0c0" /></FootBar>
          <Grow />
          <ShortLines />
          <FootBar $h={17} $pl={5} $pb={1}>
            <Icon n="footage" w={17} h={14} /><Icon n="folder" w={13} h={11} ml={10} /><Icon n="comp" w={17} h={13} ml={10} /><Icon n="rocket" w={17} h={14} ml={10} />
            <DepthButton><Txt $s={10.5} $ls={-0.6} $c="#c0c0c0">8 bpc    .</Txt></DepthButton>
            <Icon n="trash" w={13} h={14} />
          </FootBar>
        </Panel>
        <Panel>
          <Tabs $pl={11}>
            <Tab $w={116} $on $mr={38}>
              <Icon n="tabClose" w={5} c="#bbb" /><Icon n="lock" w={9} h={10} ml={11} c="#666" />
              <Han $c="#f0f0f0" $ml={9} $ls={0.8} $b>合成</Han><None c={BLUE} ml={4} w={42} /><Burger $ml={2} />
            </Tab>
            <Tab $w={150}><Han $c="#8a8a8a" $ls={0.8}>流程图</Han><None ml={3} /></Tab>
            <Tab $w={138}><Han $c="#8a8a8a">素材</Han><None ml={7} /></Tab>
            <Tab $w={80}><Han $c="#8a8a8a">图层</Han><None ml={7} /></Tab>
          </Tabs>
          <Grow $h={26} />
          <Rule />
          <Grow />
          <Rule />
          <FootBar $h={23} $pl={6}>
            <Icon n="stack" w={13} h={12} c="#5e5e5e" /><Icon n="monitor" w={13} h={12} ml={9} c="#5e5e5e" /><Icon n="mask" w={16} h={15} ml={7} c="#747474" />
            <Field $w={70} $ml={3}><Txt $c="#666" $s={12} $ls={-0.4}>(5300%)</Txt><Icon n="chevron" w={9} ml={6} /></Field>
            <Icon n="region" w={15} h={14} ml={3} c="#606060" />
            <Tool $on $ml={4} $w={30}><Icon n="shape" w={18} h={12} /></Tool>
          </FootBar>
        </Panel>
        <Panel>
          {["信息", "音频", "预览", "对齐", "库", "跟踪器"].map((t) => (
            <SideTitle key={t}><Han $c="#6a6a6a" $ls={0.8}>{t}</Han></SideTitle>
          ))}
          <SideTitle $last><Han $c="#6a6a6a" $ls={0.9}>效果和预设</Han><Burger /></SideTitle>
          <Field $w={196} $ml={5}><SearchGlyph /></Field>
          <EffectList>
            {effects.map((e) => <EffectRow key={e}><Icon n="right" w={5} h={8} />{mixed(e)}</EffectRow>)}
          </EffectList>
        </Panel>
      </Upper>
      <Timeline>
        <LayerPane>
          <Tabs $pl={10}>
            <Tab $w={70} $on $mr={38}><Icon n="tabClose" w={5} c="#aaa" /><None ml={10} /><Burger $ml={3} /></Tab>
            <Tab $w={80}><Han $c="#666" $ls={0.7}>渲染队列</Han></Tab>
          </Tabs>
          <SwitchRow>
            <Field $w={253} $ml={107}><SearchGlyph /></Field>
            <Icon n="branch" w={17} h={14} ml={15} /><Icon n="cube" w={17} ml={16} /><Icon n="shy" w={16} h={14} ml={18} />
            <Icon n="film" w={14} ml={11} /><Icon n="blur" w={15} ml={12} /><Icon n="graph" w={16} ml={18} />
          </SwitchRow>
          <ColumnHead>
            <Col $w={70} $pl={5} $sep><Icon n="eye" w={11} h={12} /><Icon n="speaker" w={12} h={12} ml={3} /><Dot /><Icon n="locked" w={10} h={12} ml={7} /></Col>
            <Col $w={31} $pl={11} $sep><Icon n="tag" w={12} /></Col>
            <Col $w={33} $pl={5} $sep><Txt $c="#d8d8d8" $s={11} $up={2}>#</Txt></Col>
            <Col $w={130} $pl={5} $sep><Han $c="#ececec" $ls={0.8}>源名称</Han></Col>
            <Col $w={165} $pl={5} $sep><Han $c="#ececec" $w={76}>模式</Han><Txt $c="#d0d0d0" $s={11.5} $w={17} $up={2}>T</Txt><Txt $c="#e4e4e4" $s={11.5} $ls={-0.3} $up={2}>TrkMat</Txt></Col>
            <Col $w={118} $pl={6} $sep><Han $c="#ececec" $ls={1}>父级和链接</Han></Col>
            <Col />
          </ColumnHead>
          <Grow />
          <ShortFoot>
            <Icon n="copy" w={12} /><OnBox><Icon n="overlap" w={12} c={BLUE} /></OnBox><Icon n="curly" w={12} ml={4} c="#a0a0a0" />
            <FootGap /><FootBtn><Han $c="#d0d0d0" $s={12.5} $ls={0} $up={-1}>切换开关/模式</Han></FootBtn>
          </ShortFoot>
        </LayerPane>
        <TrackPane>
          <WorkArea><Handle $left /><WorkBar /><Handle /></WorkArea>
          <Ticks>{Array.from({ length: 16 }, (_, i) => <Tick key={i} />)}</Ticks>
          <RulerEnd />
          <Tracks />
          <ZoomBar>
            <svg width="100" height="14" viewBox="0 0 100 14" fill="none">
              <path d="m0 8 2.500-2 1 .5L5.500 4 9 8z" fill="#5a5a5a" />
              <path d="M28 6.500h39" stroke="#6e6e6e" strokeWidth="2" />
              <circle cx="25" cy="7.500" r="4" stroke="#d0d0d0" strokeWidth="1.800" />
              <path d="m80 10 5-5 1 .8L83 10zM85 10l5.500-6 6 6z" fill="#5e5e5e" />
            </svg>
          </ZoomBar>
        </TrackPane>
        <EdgePane>
          <Icon n="marker" w={11} h={14} ml={3} c="#616161" />
          <Icon n="keyframe" w={14} h={12} c="#b8b8b8" />
        </EdgePane>
      </Timeline>
      <SettingsDialog />
      <Watermark width="330" height="160" fill="#cecece">
        <text x="7" y="101" fontFamily="Liberation Sans" fontWeight="700" fontSize="68" textLength="104" lengthAdjust="spacingAndGlyphs" stroke="#cecece" strokeWidth="1.500">Bai</text>
        <ellipse cx="123.500" cy="45" rx="11" ry="14.500" />
        <ellipse cx="145" cy="23.500" rx="10.500" ry="15" />
        <ellipse cx="172" cy="25.500" rx="11" ry="14.500" transform="rotate(8 172 25)" />
        <ellipse cx="189" cy="51.500" rx="11" ry="14.500" />
        <path d="M156 47c10 0 15 9 20 15 8 9 18 14 18 26 0 10-8 16-17 16-8 0-14-2-21-2s-13 1-19 1c-11 0-18-6-18-16 0-12 9-17 17-26 6-7 10-14 20-14z" />
        <text x="129" y="94" fontFamily="Liberation Sans" fontWeight="700" fontSize="44" fill="#5a5a5a" textLength="51" lengthAdjust="spacingAndGlyphs">du</text>
        <text x="204" y="97" fontFamily="Noto Sans CJK SC" fontWeight="900" fontSize="51" textLength="102" lengthAdjust="spacingAndGlyphs" stroke="#cecece">经验</text>
        <text x="8" y="142" fontFamily="Noto Sans" fontWeight="500" fontSize="34" fill="#e2e2e2" textLength="304" lengthAdjust="spacingAndGlyphs">jingyan.baidu.com</text>
      </Watermark>
    </Desktop>
  );
}
